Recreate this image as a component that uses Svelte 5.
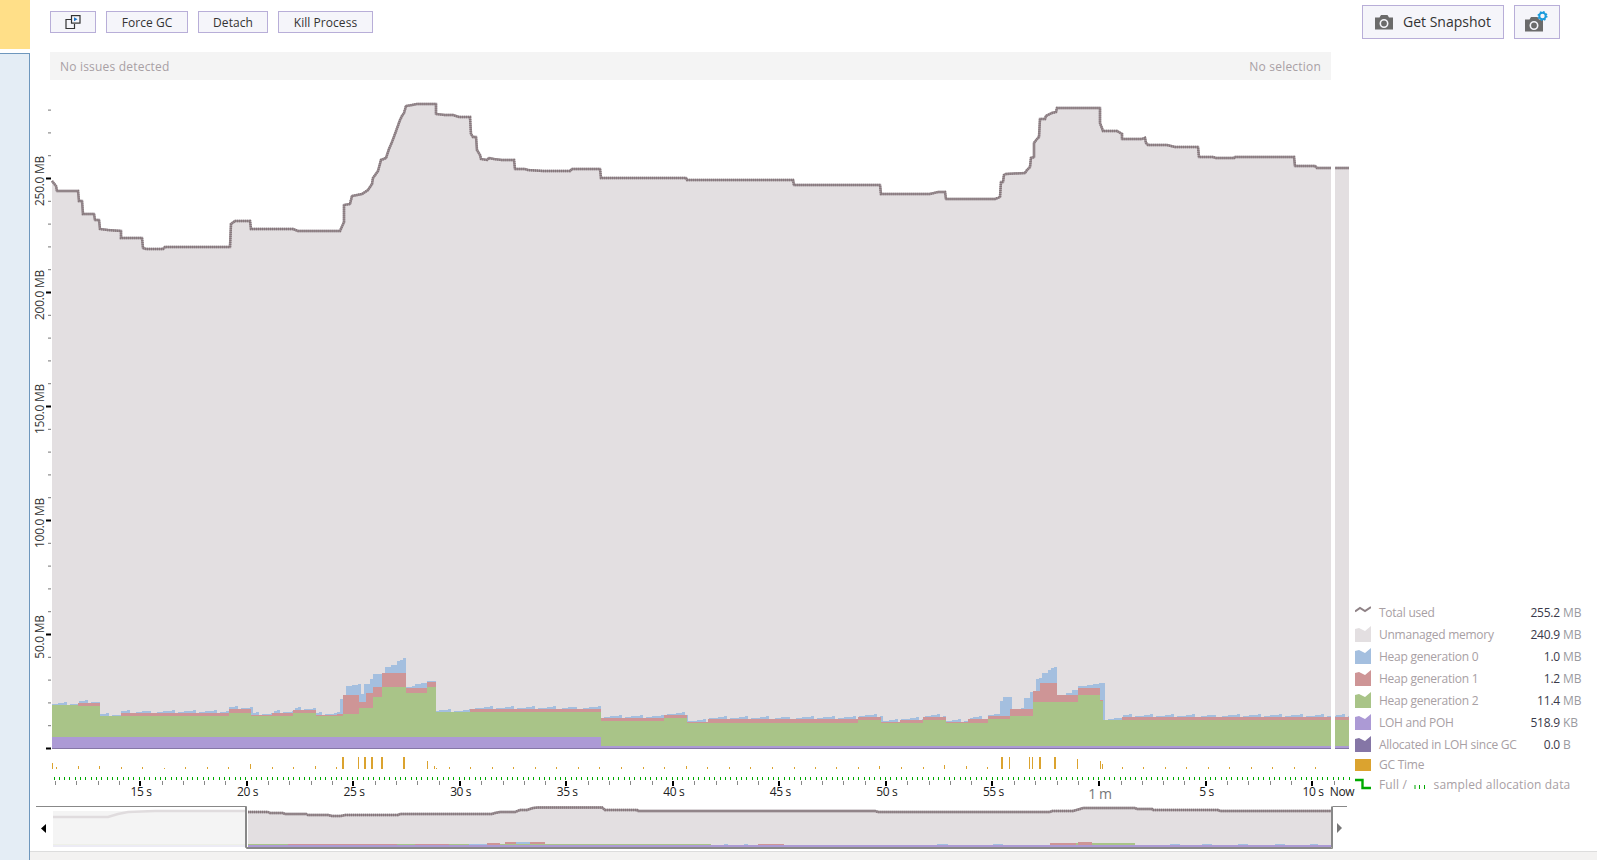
<script>
	const BOTTOM = 749;

	// total used curve, in page pixels
	const total = [
		[52, 181], [56, 186], [57, 191], [78, 191], [79, 201], [82, 201], [83, 214], [94, 214], [95, 220], [99, 220],
		[100, 229], [108, 230], [121, 231], [121, 238], [142, 238], [143, 248], [146, 249], [163, 249], [165, 247],
		[230, 247], [231, 224], [235, 221], [250, 221], [251, 229], [293, 229], [298, 231], [340, 231], [344, 222],
		[344, 205], [350, 204], [352, 196], [362, 194], [368, 190], [372, 184], [373, 178], [378, 171], [381, 160],
		[386, 158], [389, 149], [392, 142], [395, 134], [400, 120], [402, 116], [404, 113], [406, 106], [412, 105],
		[417, 104], [436, 104], [436, 114], [445, 115], [453, 115], [459, 117], [470, 117], [471, 134], [473, 137],
		[476, 137], [477, 150], [480, 155], [481, 159], [487, 160], [489, 158], [494, 159], [502, 160], [514, 160],
		[515, 169], [525, 169], [528, 170], [543, 171], [570, 171], [572, 169], [600, 169], [601, 178], [686, 178],
		[687, 180], [793, 180], [794, 185], [880, 185], [881, 194], [930, 194], [938, 192], [945, 192], [946, 199],
		[995, 199], [1000, 197], [1001, 182], [1003, 182], [1004, 175], [1006, 174], [1025, 173], [1027, 170],
		[1030, 167], [1031, 158], [1034, 157], [1034, 143], [1037, 139], [1039, 137], [1040, 119], [1045, 119],
		[1046, 116], [1052, 113], [1056, 112], [1057, 108], [1100, 108], [1100, 123], [1103, 131], [1117, 131],
		[1122, 134], [1122, 139], [1142, 139], [1145, 138], [1146, 143], [1148, 145], [1167, 145], [1175, 147],
		[1198, 147], [1199, 157], [1213, 157], [1216, 158], [1234, 158], [1235, 157], [1294, 157], [1295, 166],
		[1315, 166], [1317, 168], [1349, 168]
	];

	// [x where the step starts, top y]
	const green = [
		[52, 705], [78, 706], [100, 716], [229, 713], [251, 716], [293, 713], [316, 716], [343, 714], [359, 708],
		[373, 697], [382, 687], [406, 693], [427, 687], [436, 712], [601, 721], [664, 718], [687, 723], [858, 720],
		[881, 723], [923, 720], [946, 723], [988, 719], [1010, 716], [1033, 702], [1078, 695], [1100, 701], [1103, 720]
	];
	const red = [
		[52, 705], [78, 703], [100, 716], [121, 713], [229, 709], [251, 715], [272, 713], [293, 710], [316, 715],
		[337, 714], [343, 695], [359, 702], [366, 693], [373, 687], [382, 673], [406, 688], [427, 682], [436, 712],
		[470, 709], [601, 718], [664, 715], [687, 722], [708, 719], [858, 717], [881, 722], [900, 720], [923, 717],
		[946, 722], [968, 719], [988, 716], [1010, 709], [1033, 691], [1040, 683], [1057, 695], [1078, 688],
		[1100, 700], [1103, 720], [1122, 717]
	];
	const blueSpikes = [
		[338, 699], [342, 695], [344, 686], [350, 685], [357, 684], [360, 694], [363, 691], [364, 684], [368, 685],
		[370, 679], [371, 674], [374, 675], [376, 674], [381, 673], [384, 667], [389, 665], [395, 664], [396, 661],
		[400, 660], [402, 658], [406, 687], [410, 686], [413, 684], [420, 683], [427, 681], [436, 712]
	];
	const blueSpikes2 = [
		[998, 701], [1001, 697], [1011, 709], [1020, 708], [1024, 698], [1030, 692], [1032, 691], [1034, 679],
		[1039, 678], [1040, 673], [1046, 670], [1050, 668], [1053, 667], [1057, 695], [1065, 693], [1072, 690],
		[1078, 686], [1085, 685], [1092, 684], [1097, 683], [1103, 720], [1107, 719], [1113, 718]
	];

	function stepAt(list, x) {
		let y = list[0][1];
		for (const s of list) {
			if (s[0] > x) break;
			y = s[1];
		}
		return y;
	}

	function stepPoints(list, end) {
		let pts = [];
		list.forEach((s, i) => {
			const next = i + 1 < list.length ? list[i + 1][0] : end;
			pts.push(`${s[0]},${s[1]}`, `${next},${s[1]}`);
		});
		return pts;
	}

	function area(list, end) {
		return [`${list[0][0]},${BOTTOM}`, ...stepPoints(list, end), `${end},${BOTTOM}`].join(' ');
	}

	// blue sits on the red layer and grows between collections
	function blueSteps() {
		let out = [];
		for (let x = 52; x < 1349; x += 3) {
			let y;
			if (x >= 338 && x < 436) y = stepAt(blueSpikes, x);
			else if (x >= 998 && x < 1122) y = stepAt(blueSpikes2, x);
			else {
				const phase = (((x - 449) % 21.3) + 21.3) % 21.3;
				y = stepAt(red, x) - Math.round(phase / 7.5);
			}
			out.push([x, y]);
		}
		return out;
	}

	const totalArea = [`52,${BOTTOM}`, ...total.map((p) => p.join(',')), `1349,${BOTTOM}`].join(' ');
	const totalLine = total.map((p) => p.join(',')).join(' ');

	const minorY = Array.from({ length: 29 }, (_, i) => 748 - 22.8 * i).filter((_, i) => i % 5 !== 0);
	const majorY = [0, 50, 100, 150, 200, 250].map((v) => ({ v, y: 748 - v * 2.28 }));

	const greenDots = Array.from({ length: 244 }, (_, i) => 53.5 + i * 5.33);
	const timeMinor = Array.from({ length: 62 }, (_, i) => 55 + i * 21.31).filter((x) => Math.abs(((x - 140) / 106.55) % 1) > 0.1 && Math.abs(((x - 140) / 106.55) % 1) < 0.9);
	const timeMajor = ['15 s', '20 s', '25 s', '30 s', '35 s', '40 s', '45 s', '50 s', '55 s', '1 m', '5 s', '10 s'].map((t, i) => ({ t, x: 140 + i * 106.55 }));

	// x, width, height
	const gc = [
		[52, 1, 6], [56, 1, 2], [78, 1, 3], [99, 1, 3], [121, 1, 2], [142, 1, 2], [164, 1, 1], [185, 1, 2], [207, 1, 2],
		[228, 1, 2], [250, 1, 5], [272, 1, 2], [293, 1, 2], [315, 1, 3], [336, 1, 2], [342, 2, 12], [358, 1, 12],
		[364, 2, 12], [371, 2, 12], [381, 2, 12], [403, 2, 12], [427, 1, 8], [434, 1, 3], [436, 1, 1],
		...[449, 470, 492, 513, 535, 556, 578, 599, 621, 643, 664, 707, 729, 750, 772, 794, 815, 836, 858, 901, 923, 1122, 1143, 1165, 1186, 1208, 1229, 1251, 1272, 1294, 1315].map((x) => [x, 1, 2]),
		[686, 1, 3], [879, 1, 3], [944, 1, 4], [966, 1, 3], [987, 1, 2], [1001, 2, 12], [1009, 1, 12], [1029, 1, 12],
		[1032, 1, 12], [1039, 2, 12], [1054, 2, 12], [1077, 1, 10], [1100, 1, 8], [1102, 1, 5]
	];

	const overviewLine = '248,812 268,812 270,813 283,813 285,814 306,814 308,815 328,815 332,816 341,816 345,815 398,815 400,814 492,814 495,813 500,812 515,812 520,810 527,810 533,808 538,807.5 602,807.5 605,810 637,810 638,811 875,811 878,812 1050,812 1052,811 1073,811 1080,809 1083,808 1135,808 1137,809 1152,809 1153,810 1218,810 1220,811 1331,811';
	const overviewFaded = '53,817 108,817 118,814 128,812 155,811 245,811';

	const overviewBits = [
		[248, 288, 844, '#a9c488'], [288, 397, 844, '#ce9596'], [397, 415, 844, '#a9c488'], [415, 449, 844, '#ce9596'],
		[449, 469, 844, '#a9c488'], [469, 487, 844, '#a4bfdf'], [487, 500, 843, '#ce9596'], [505, 545, 842, '#ce9596'],
		[516, 530, 842, '#a4bfdf'], [500, 711, 844, '#a9c488'], [724, 728, 844, '#a4bfdf'], [744, 748, 844, '#a4bfdf'],
		[758, 784, 844, '#ce9596'], [937, 948, 844, '#a4bfdf'], [993, 1003, 844, '#a4bfdf'], [1050, 1105, 843, '#ce9596'],
		[1076, 1135, 843, '#a9c488'], [1078, 1092, 842, '#ce9596'], [1170, 1180, 844, '#a4bfdf'], [1202, 1212, 844, '#a4bfdf'],
		[1238, 1248, 844, '#a4bfdf'], [1275, 1285, 844, '#a4bfdf'], [1310, 1318, 844, '#a4bfdf']
	];

	const legend = [
		{ label: 'Unmanaged memory', value: '240.9', unit: 'MB', color: '#e3dfe1' },
		{ label: 'Heap generation 0', value: '1.0', unit: 'MB', color: '#a4bfdf' },
		{ label: 'Heap generation 1', value: '1.2', unit: 'MB', color: '#ce9596' },
		{ label: 'Heap generation 2', value: '11.4', unit: 'MB', color: '#a9c488' },
		{ label: 'LOH and POH', value: '518.9', unit: 'KB', color: '#ac9ad5' },
		{ label: 'Allocated in LOH since GC', value: '0.0', unit: 'B', color: '#8576a6' }
	];
</script>

{#snippet camera()}
	<path d="M0 3.500h4.500L6 1h6.500L14 3.500h4v12H0z" fill="#6b6b6b" />
	<circle cx="9" cy="9.500" r="3.700" fill="none" stroke="#f5f5fa" stroke-width="1.600" />
{/snippet}

<div class="app">
	<aside class="side">
		<div class="tab"></div>
		<div class="panel"></div>
	</aside>

	<main class="main">
		<header class="toolbar">
			<div class="actions">
				<button class="wide-icon" aria-label="Open in window">
					<svg width="16" height="15" viewBox="0 0 16 15">
						<path d="M7.500 4.500H1v9h8.500V9" fill="none" stroke="#333" stroke-width="1.200" />
						<rect x="6.500" y="0.600" width="8.500" height="7.500" fill="#f5f5fa" stroke="#333" stroke-width="1.200" />
						<path d="M9 2.200l3.500 2-3.500 2z" fill="#1b73c4" />
					</svg>
				</button>
				<button class="force">Force GC</button>
				<button class="detach">Detach</button>
				<button class="kill">Kill Process</button>
			</div>
			<div class="snapshots">
				<button class="snapshot">
					<svg width="18" height="16" viewBox="0 0 18 16">{@render camera()}</svg>
					<span>Get Snapshot</span>
				</button>
				<button class="snapshot-settings" aria-label="Snapshot settings">
					<svg width="24" height="22" viewBox="0 0 24 22">
						<g transform="translate(0 5)">{@render camera()}</g>
						<circle cx="17.500" cy="5" r="3.200" fill="none" stroke="#1a9bdc" stroke-width="2" />
						<circle cx="17.500" cy="5" r="4.300" fill="none" stroke="#1a9bdc" stroke-width="1.400" stroke-dasharray="1.600 1.800" />
					</svg>
				</button>
			</div>
		</header>

		<div class="issues">
			<span>No issues detected</span>
			<span>No selection</span>
		</div>

		<div class="chart-row">
			<svg class="chart" width="1325" height="771" viewBox="30 80 1325 771">
				<!-- memory stack -->
				<polygon points={totalArea} fill="#e3dfe1" />
				<polygon points={area(blueSteps(), 1349)} fill="#a4bfdf" />
				<polygon points={area(red, 1349)} fill="#ce9596" />
				<polygon points={area(green, 1349)} fill="#a9c488" />
				<polygon points={area([[52, 737], [601, 746]], 1349)} fill="#ac9ad5" />
				<rect x="52" y="748" width="1297" height="1" fill="#8576a6" />
				<polyline points={totalLine} fill="none" stroke="#a0949a" stroke-width="2.500" />
				<polyline points={totalLine} fill="none" stroke="#847679" stroke-width="2.500" stroke-dasharray="1 1" />
				<rect x="1331" y="160" width="4" height="590" fill="#fff" />

				<!-- memory axis -->
				{#each minorY as y}
					<rect x="48" y={y} width="3" height="1" fill="#777" />
				{/each}
				{#each majorY as m}
					<rect x="46" y={m.y - 0.5} width="5" height="2" fill="#000" />
					{#if m.v > 0}
						<text class="axis" transform="translate(44 {m.y + 3}) rotate(-90)" text-anchor="middle">{m.v}.0 MB</text>
					{/if}
				{/each}

				<!-- gc pauses -->
				{#each gc as g}
					<rect x={g[0]} y={769 - g[2]} width={g[1]} height={g[2]} fill="#dba32f" />
				{/each}

				<!-- time axis -->
				{#each greenDots as x}
					<rect x={Math.round(x)} y="777" width="1" height="3" fill="#00aa00" />
				{/each}
				{#each timeMinor as x}
					<rect x={Math.round(x)} y="781" width="1" height="4" fill="#888" />
				{/each}
				{#each timeMajor as m}
					<rect x={Math.round(m.x) - 1} y="781" width="2" height="5" fill="#000" />
					<text class={m.t === '1 m' ? 'minute' : 'tick'} x={m.x + 1} y={m.t === '1 m' ? 799 : 796} text-anchor="middle">{m.t}</text>
				{/each}
				<text class="tick" x="1342" y="796" text-anchor="middle">Now</text>

				<!-- overview -->
				<rect x="53" y="811" width="193" height="36" fill="#f4f4f4" />
				<polyline points={overviewFaded} fill="none" stroke="#e0dcde" stroke-width="2.500" />
				<rect x="53" y="844" width="193" height="1" fill="#eef0e8" />
				<rect x="53" y="845" width="193" height="2" fill="#ecebf4" />
				<polygon points="248,847 {overviewLine} 1331,847" fill="#e3dfe1" />
				<polyline points={overviewLine} fill="none" stroke="#a0949a" stroke-width="2.500" />
				<polyline points={overviewLine} fill="none" stroke="#847679" stroke-width="2.500" stroke-dasharray="1 1" />
				{#each overviewBits as b}
					<rect x={b[0]} y={b[2]} width={b[1] - b[0]} height={845 - b[2]} fill={b[3]} />
				{/each}
				<rect x="248" y="845" width="1083" height="2" fill="#ac9ad5" />
				<path d="M36 806.500H246.500V848.500H1332.500V806.500H1347" fill="none" stroke="#888" stroke-width="1" />
				<path d="M36 806.500H245.500V847.500H1331.500V806.500" fill="none" stroke="#888" stroke-width="1" />
				<path d="M46 824v9l-5-4.500z" fill="#000" />
				<path d="M1337 823v10l5-5z" fill="#777" />
			</svg>

			<ul class="legend">
				<li>
					<svg width="16" height="16" viewBox="0 0 16 16">
						<path d="M0 7.500L5 4l5 3 6-4" fill="none" stroke="#8f8286" stroke-width="2" />
					</svg>
					<span class="label">Total used</span>
					<span class="value">255.2</span>
					<span class="unit">MB</span>
				</li>
				{#each legend as item}
					<li>
						<svg width="16" height="16" viewBox="0 0 16 16">
							<path d="M0 3l4-1 6 3 6-5v16H0z" fill={item.color} />
						</svg>
						<span class="label">{item.label}</span>
						<span class="value">{item.value}</span>
						<span class="unit">{item.unit}</span>
					</li>
				{/each}
				<li class="short">
					<svg width="16" height="16" viewBox="0 0 16 16"><rect y="2" width="16" height="12" fill="#dba32f" /></svg>
					<span class="label">GC Time</span>
				</li>
				<li class="short">
					<svg width="16" height="16" viewBox="0 0 16 16">
						<path d="M0 3h7.500v8H16" fill="none" stroke="#00aa00" stroke-width="2.400" />
					</svg>
					<span class="label full">
						Full /
						<svg class="dots" width="12" height="4" viewBox="0 0 12 4"><path d="M1 0v4M5.500 0v4M10.500 0v4" stroke="#00aa00" stroke-width="1" /></svg>
						sampled allocation data
					</span>
				</li>
			</ul>
		</div>

		<div class="status"></div>
	</main>
</div>

<style>
	:global(body) {
		margin: 0;
		background: #fff;
		overflow: hidden;
	}

	.app {
		display: grid;
		grid-template-columns: 30px 1fr;
		height: 860px;
		font-family: 'Open Sans', 'Noto Sans', sans-serif;
		font-size: 12px;
	}

	.side {
		display: flex;
		flex-direction: column;
		gap: 4px;
	}

	.tab {
		height: 49px;
		background: #ffdf88;
	}

	.panel {
		flex: 1;
		background: #e4edf5;
		border-top: 1px solid #6e97bd;
		border-right: 1px solid #6e97bd;
	}

	.main {
		display: flex;
		flex-direction: column;
		min-width: 0;
	}

	.toolbar {
		display: flex;
		justify-content: space-between;
		align-items: flex-start;
		height: 47px;
		padding: 5px 37px 0 20px;
	}

	.actions {
		display: flex;
		gap: 10px;
		margin-top: 6px;
	}

	.snapshots {
		display: flex;
		gap: 10px;
	}

	button {
		display: flex;
		align-items: center;
		justify-content: center;
		box-sizing: border-box;
		height: 22px;
		padding: 0;
		background: #f5f5fa;
		border: 1px solid #b8aed8;
		border-radius: 0;
		color: #333;
		font: inherit;
		letter-spacing: 0.05px;
	}

	.wide-icon { width: 46px; }
	.force { width: 82px; }
	.detach { width: 70px; }
	.kill { width: 95px; }

	.snapshot,
	.snapshot-settings {
		height: 34px;
	}

	.snapshot {
		justify-content: flex-start;
		width: 142px;
		padding-left: 12px;
		gap: 10px;
		font-size: 14px;
		letter-spacing: 0;
	}

	.snapshot span {
		margin-top: -2px;
	}

	.snapshot-settings {
		width: 46px;
	}

	.issues {
		display: flex;
		justify-content: space-between;
		align-items: center;
		box-sizing: border-box;
		width: 1281px;
		height: 28px;
		margin-left: 20px;
		padding: 0 10px;
		background: #f4f4f4;
		color: #a8a0a4;
		letter-spacing: 0.2px;
	}

	.chart-row {
		display: flex;
		height: 771px;
	}

	.chart {
		display: block;
		flex: none;
	}

	.axis {
		fill: #333;
		font-size: 12px;
		letter-spacing: -0.3px;
	}

	.tick {
		fill: #222;
		font-size: 12px;
		letter-spacing: -0.4px;
	}

	.minute {
		fill: #777;
		font-size: 14px;
		letter-spacing: -0.4px;
	}

	.legend {
		flex: none;
		display: flex;
		flex-direction: column;
		justify-content: flex-end;
		box-sizing: border-box;
		width: 237px;
		margin: 0;
		padding: 0 0 56px;
		list-style: none;
		color: #a8a0a4;
	}

	.legend li {
		display: grid;
		grid-template-columns: 24px 1fr auto 32px;
		align-items: center;
		height: 22px;
	}

	.legend li.short {
		height: 20px;
	}

	.label {
		letter-spacing: -0.25px;
		white-space: nowrap;
	}

	.short .label {
		margin-top: -2px;
	}

	.label.full {
		grid-column: 2 / 5;
		letter-spacing: 0.15px;
	}

	.dots {
		margin: 0 4px;
	}

	.value {
		color: #3a3a4a;
		letter-spacing: -0.2px;
	}

	.unit {
		padding-left: 3px;
		color: #9a9a9f;
	}

	.status {
		flex: 1;
		background: #f3f2f1;
		border-top: 1px solid #ddd;
	}
</style>
